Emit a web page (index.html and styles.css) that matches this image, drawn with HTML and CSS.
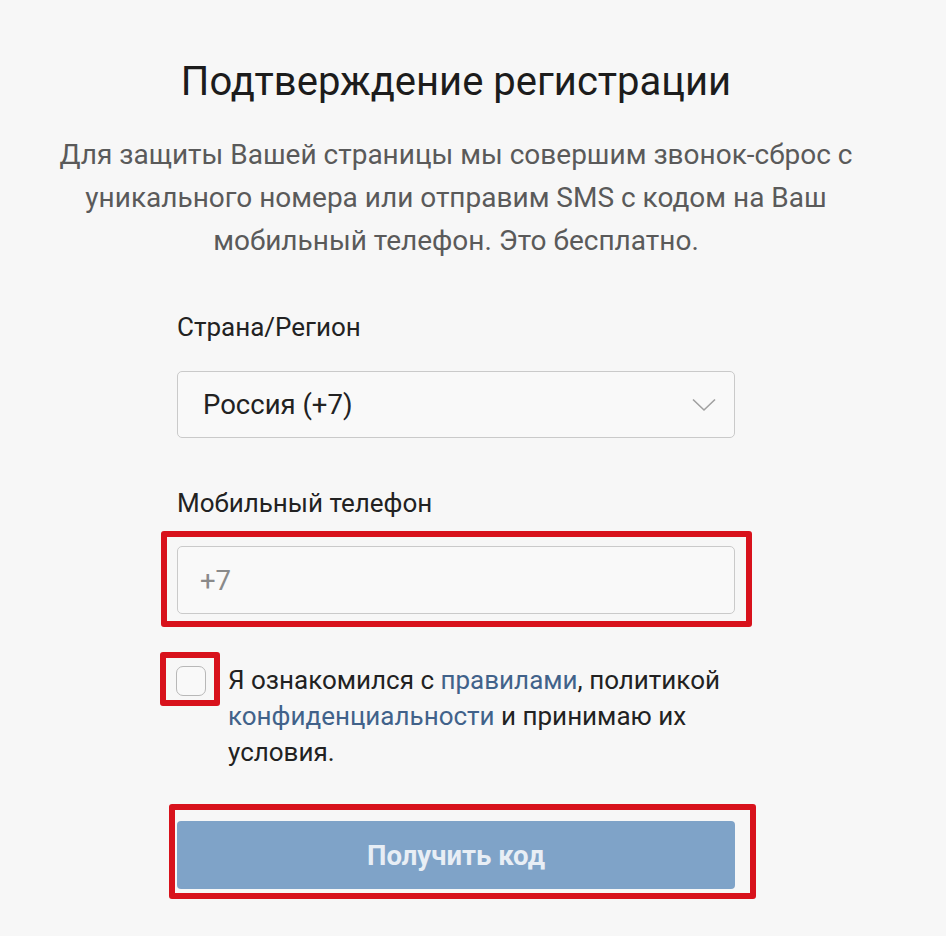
FILE: index.html
```html
<!DOCTYPE html>
<html lang="ru">
<head>
<meta charset="utf-8">
<title>Подтверждение регистрации</title>
<link rel="stylesheet" href="styles.css">
</head>
<body>
<div class="page">
  <h1 class="title">Подтверждение регистрации</h1>
  <p class="desc">Для защиты Вашей страницы мы совершим звонок-сброс с<br>уникального номера или отправим SMS с кодом на Ваш<br>мобильный телефон. Это бесплатно.</p>
  <form class="form">
    <div class="label label-first">Страна/Регион</div>
    <div class="select">
      <span class="select-text">Россия (+7)</span>
      <svg class="chevron" width="24" height="14" viewBox="0 0 24 14"><path d="M1 1.5 L12 12 L23 1.5" fill="none" stroke="#a0a0a0" stroke-width="1.6"/></svg>
    </div>
    <div class="label label-second">Мобильный телефон</div>
    <div class="field-wrap">
      <div class="input"><span class="placeholder">+7</span></div>
      <span class="mark mark-input"></span>
    </div>
    <div class="agree">
      <div class="check-wrap">
        <span class="checkbox"></span>
        <span class="mark mark-check"></span>
      </div>
      <p class="agree-text">Я ознакомился с <a class="link">правилами</a>, политикой<br><a class="link">конфиденциальности</a> и принимаю их<br>условия.</p>
    </div>
    <div class="btn-wrap">
      <div class="btn">Получить код</div>
      <span class="mark mark-btn"></span>
    </div>
  </form>
</div>
</body>
</html>
```

FILE: styles.css
```css
html, body {
  margin: 0;
  padding: 0;
  background: #f7f7f7;
}
body {
  font-family: Roboto, "Liberation Sans", sans-serif;
  color: #222;
}
.page {
  width: 912px;
  padding-top: 58px;
  padding-bottom: 40px;
}
.title {
  margin: 0;
  text-align: center;
  font-size: 40px;
  line-height: 48px;
  font-weight: 400;
  color: #1c1c1c;
}
.desc {
  margin: 27px 0 0;
  text-align: center;
  font-size: 28px;
  line-height: 43px;
  color: #5a5a5a;
}
.form {
  width: 558px;
  margin: 0 auto;
}
.label {
  font-size: 26px;
  line-height: 30px;
  color: #222;
}
.label-first { margin-top: 50px; }
.label-second { margin-top: 50px; }
.select {
  margin-top: 29px;
  height: 67px;
  box-sizing: border-box;
  border: 1px solid #cacaca;
  border-radius: 5px;
  background: #f9f9f9;
  display: flex;
  align-items: center;
  justify-content: space-between;
  padding: 0 18px 0 25px;
}
.select-text {
  font-size: 27.5px;
  color: #222;
}
.chevron { display: block; }
.field-wrap {
  position: relative;
  margin-top: 28px;
}
.input {
  height: 68px;
  box-sizing: border-box;
  border: 1px solid #cacaca;
  border-radius: 5px;
  background: #f9f9f9;
  display: flex;
  align-items: center;
  padding-left: 22px;
}
.placeholder {
  font-size: 27.5px;
  color: #8a8a8a;
}
.mark {
  position: absolute;
  border: 6px solid #d8121c;
  border-radius: 3px;
  pointer-events: none;
}
.mark-input { left: -16px; right: -17px; top: -15px; bottom: -13px; }
.agree {
  margin-top: 48px;
  display: flex;
  align-items: flex-start;
}
.check-wrap {
  position: relative;
  margin-top: 4px;
  margin-left: -1px;
  width: 30px;
  height: 30px;
  flex: none;
}
.checkbox {
  display: block;
  width: 30px;
  height: 30px;
  box-sizing: border-box;
  border: 1px solid #b8b8b8;
  border-radius: 7px;
  background: #f9f9f9;
}
.mark-check { left: -16px; right: -14px; top: -14px; bottom: -10px; }
.agree-text {
  margin: 0 0 0 22px;
  font-size: 26px;
  line-height: 36px;
  color: #222;
}
.link {
  color: #41628a;
  text-decoration: none;
}
.btn-wrap {
  position: relative;
  margin-top: 51px;
}
.btn {
  height: 68px;
  border-radius: 4px;
  background: #7fa3c8;
  color: #e8eef5;
  font-size: 27.5px;
  font-weight: 700;
  display: flex;
  align-items: center;
  justify-content: center;
}
.mark-btn { left: -8px; right: -21px; top: -17px; bottom: -10px; }
```
